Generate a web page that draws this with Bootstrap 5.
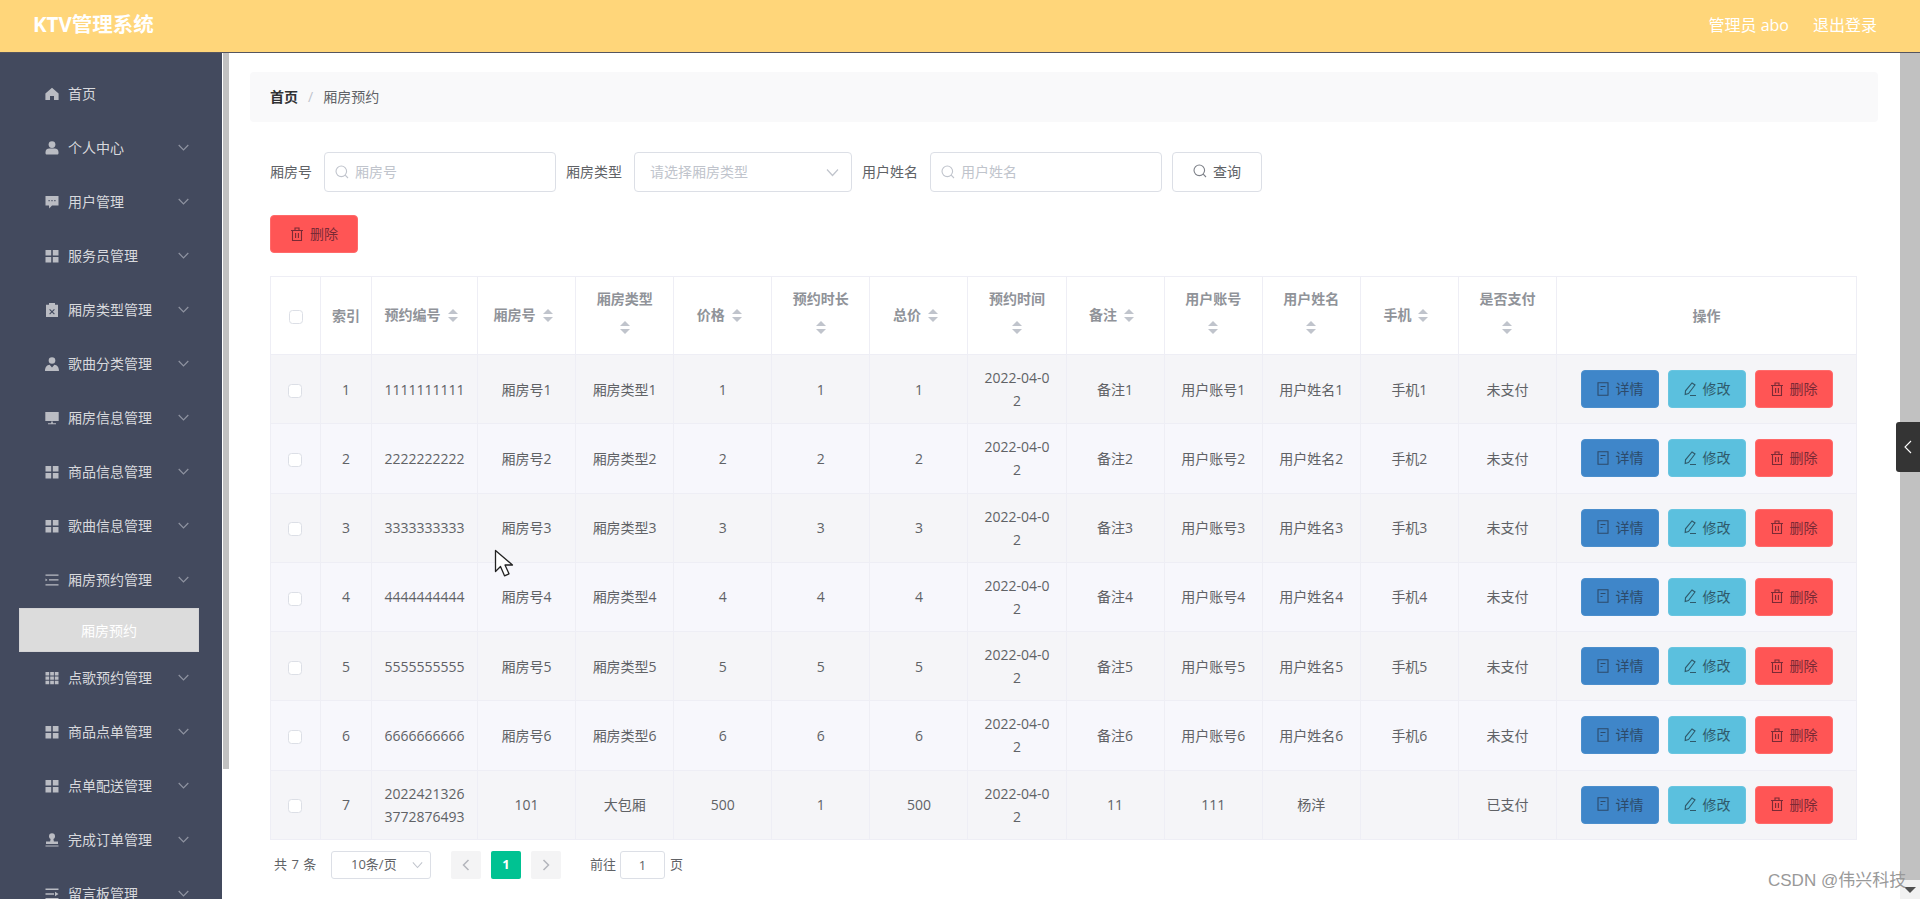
<!doctype html>
<html lang="zh-CN">
<head>
<meta charset="utf-8">
<title>KTV管理系统</title>
<link href="https://cdn.jsdelivr.net/npm/bootstrap@5.3.0/dist/css/bootstrap.min.css" rel="stylesheet">
<style>
html,body{height:100%;}
body{font-family:"Open Sans","Noto Sans CJK SC",sans-serif;font-size:14px;color:#606266;overflow:hidden;background:#fff;}
.ico{width:14px;height:14px;fill:currentColor;flex:none;}
.line-ico{width:14px;height:14px;fill:none;stroke:currentColor;stroke-width:1.1;flex:none;}
.top-bar{height:53px;padding:0 43px 3px 33px;background:#ffd67a;border-bottom:1px solid #55555f;flex:none;}
.brand-text{font-size:20.5px;font-weight:700;color:#fff;padding:0;margin:0;}
.top-link{font-size:16px;color:#fff;text-decoration:none;}
.app-body{min-height:0;}
.side-menu{width:222px;background:#434a5e;padding-top:15px;overflow:hidden;flex:none;}
.side-link{height:54px;flex:none;padding:0 33px 3px 45px;color:#d8d9dd;font-size:14px;gap:9px;text-decoration:none;}
.side-link .ico{color:#babcc3;}
.side-link .caret-down{width:11px;height:7px;margin-left:auto;fill:none;stroke:#8f93a1;stroke-width:1.2;flex:none;}
.side-sub{height:44px;flex:none;margin:0 23px 0 19px;background:#dcdcdc;color:#fff;border:1px solid #d4d4d6;}
.side-track{width:8px;flex:none;background:#fff;padding:0 1px;}
.side-thumb{height:716px;background:#c1c1c1;}
.main-pane{padding:19px 22px 0 20px;min-width:0;}
.crumb-box{height:50px;background:#f9f9fa;border-radius:4px;padding:0 20px 2px;margin:0;--bs-breadcrumb-margin-bottom:0;--bs-breadcrumb-item-padding-x:10px;--bs-breadcrumb-divider-color:#c0c4cc;}
.crumb-box .breadcrumb-item{color:#606266;}
.crumb-box .breadcrumb-item:first-child{color:#303133;font-weight:700;}
.crumb-wrap{height:50px;}
.work-area{padding:30px 1px 0 20px;}
.search-row{gap:10px;height:40px;margin-bottom:23px;}
.field-label{color:#606266;margin-right:2px;white-space:nowrap;padding-bottom:2px;}
.input-holder{width:232px;}
.input-holder .form-control{height:40px;font-size:14px;padding:0 12px 2px 30px;border-color:#dcdfe6;border-radius:4px;}
.input-holder .form-control::placeholder{color:#c0c4cc;}
.input-holder .line-ico{position:absolute;left:11px;top:13px;color:#c0c4cc;}
.select-holder{width:218px;}
.select-holder .form-select{height:40px;font-size:14px;color:#c0c4cc;padding:0 30px 2px 15px;border-color:#dcdfe6;border-radius:4px;background-position:right 12px center;background-size:13px 9px;background-image:url("data:image/svg+xml,%3Csvg xmlns='http://www.w3.org/2000/svg' viewBox='0 0 13 9'%3E%3Cpath d='M1 1.500l5.500 6 5.500-6' fill='none' stroke='%23c0c4cc' stroke-width='1.2'/%3E%3C/svg%3E");}
.query-btn{width:90px;height:40px;padding:0 0 2px;font-size:14px;color:#606266;background:#fff;border:1px solid #dcdfe6;border-radius:4px;gap:6px;}
.query-btn .line-ico{color:#7d8088;}
.act-btn{height:38px;width:78px;padding:0 0 1px;font-size:14px;color:#333a48;border:1px solid transparent;border-radius:4px;gap:6px;}
.act-blue{background:#3f86c9;border-color:#4b8ecc;color:#2c4a6a;}
.act-cyan{background:#5bc0de;border-color:#68c5e0;color:#2f5a6b;}
.act-red{background:#ff5555;border-color:#ff6a6a;color:#7a2a35;}
.bulk-btn{width:88px;display:flex;margin-bottom:23px;}
.data-table{table-layout:fixed;width:1586px;margin:0;color:#606266;--bs-table-color:#606266;--bs-border-color:#eeeef5;}
.data-table>:not(caption)>*>*{padding:0 10px;line-height:23px;word-break:break-all;text-align:center;vertical-align:middle;border-color:#eeeef5;}
.data-table>tbody>tr>td.date-cell{padding:0 14px;}
.data-table th{height:78px;background:#fff;color:#909399;font-weight:700;box-shadow:none;}
.data-table td{height:69.25px;box-shadow:none;}
.data-table tbody tr:nth-child(odd) td{background:#f5f5f8;}
.data-table tbody tr:nth-child(even) td{background:#f7f7fc;}
.w-check{width:50px;}.w-idx{width:51px;}.w-code{width:106px;}.w-cell{width:98.1px;}.w-act{width:300px;}
.tick{width:14px;height:14px;margin:0;border-color:#dcdfe6;border-radius:2px;background-color:#fff;display:inline-block;vertical-align:middle;float:none;}
tbody .tick{position:relative;left:-1px;}
.sort-wrap{display:inline-flex;flex-direction:column;align-items:center;justify-content:center;gap:3px;width:24px;height:34px;vertical-align:middle;}
.sort-wrap i{display:block;width:0;height:0;border-left:5px solid transparent;border-right:5px solid transparent;}
.sort-wrap i:first-child{border-bottom:5px solid #c0c4cc;}
.sort-wrap i:last-child{border-top:5px solid #c0c4cc;}
.action-row{gap:9px;}
.pager-row{margin-top:11px;padding-left:4px;height:28px;font-size:13px;color:#606266;}
.pager-total{width:42px;margin-right:15px;white-space:nowrap;word-spacing:1px;}
.pager-size{width:100px;height:28px;margin-right:20px;font-size:13px;color:#606266;padding:0 0 0 19px;border-color:#dcdfe6;border-radius:3px;background-position:right 7px center;background-size:11px 8px;background-image:url("data:image/svg+xml,%3Csvg xmlns='http://www.w3.org/2000/svg' viewBox='0 0 13 9'%3E%3Cpath d='M1 1.500l5.500 6 5.500-6' fill='none' stroke='%23c0c4cc' stroke-width='1.2'/%3E%3C/svg%3E");}
.pager-list{gap:10px;margin:0 29px 0 0;}
.pager-list .page-item .page-link{width:30px;height:28px;padding:0;display:flex;align-items:center;justify-content:center;background:#f4f4f5;border:0;border-radius:2px;color:#b4b6bc;font-size:13px;margin:0;}
.pager-list .page-item:not(:first-child) .page-link{margin-left:0;}
.pager-list .page-item.active .page-link{background:#00c292;color:#fff;font-weight:700;}
.pager-goto{width:45px;height:28px;margin:0 5px 0 4px;padding:0;text-align:center;font-size:13px;color:#606266;border-color:#dcdfe6;border-radius:3px;}
.page-track{width:20px;flex:none;background:#c1c1c1;}
.page-track-end{height:19px;background:#f1f1f1;margin-top:auto;}
.tri-down{width:0;height:0;border-left:6px solid transparent;border-right:6px solid transparent;border-top:6px solid #505050;}
.drawer-tab{position:absolute;right:0;top:422px;width:24px;height:50px;background:#343434;border-radius:3px 0 0 3px;color:#fff;}
.mark-text{position:absolute;left:1768px;top:869px;font-size:17px;line-height:24px;color:#999;font-family:"Liberation Sans","Noto Sans CJK SC",sans-serif;white-space:nowrap;}
.pointer-img{position:absolute;left:494px;top:549px;width:22px;height:31px;}
</style>
</head>
<body class="d-flex flex-column position-relative">
<svg class="d-none" xmlns="http://www.w3.org/2000/svg">
<symbol id="i-home" viewBox="0 0 14 14"><path d="M7 .8 13.600 6.600 V13 H9 V9 H5 V13 H.4 V6.600 Z"/></symbol>
<symbol id="i-user" viewBox="0 0 14 14"><circle cx="7" cy="3.600" r="3.400"/><path d="M.5 11c0-2.600 2-3.600 3.600-3.600h5.800c1.600 0 3.600 1 3.600 3.600v1.200c0 .9-.6 1.300-1.400 1.300H1.900C1.100 13.500.5 13.100.5 12.200z"/></symbol>
<symbol id="i-chat" viewBox="0 0 14 14"><path fill-rule="evenodd" d="M.5 1h13v9.500H7L4.200 13.600 4 10.500H.5zM3.500 5v1.200h1.200V5zM6.400 5v1.200h1.200V5zM9.300 5v1.200h1.200V5z"/></symbol>
<symbol id="i-grid" viewBox="0 0 14 14"><path d="M.5 1h5.700v5.500H.5zM7.800 1h5.700v5.500H7.800zM.5 8h5.700v5.500H.5zM7.800 8h5.700v5.500H7.800z"/></symbol>
<symbol id="i-clip" viewBox="0 0 14 14"><path fill-rule="evenodd" d="M1 1.800h3V0h6v1.800h3V14H1zM5 6l2 2 2-2 .8.800-2 2 2 2-.8.800-2-2-2 2-.8-.8 2-2-2-2z"/></symbol>
<symbol id="i-tie" viewBox="0 0 14 14"><circle cx="7" cy="3.500" r="3.300"/><path d="M0 14c0-3.800 2-6 4.600-6.200L7 10.500l2.400-2.700C12 8 14 10.200 14 14z"/></symbol>
<symbol id="i-screen" viewBox="0 0 14 14"><path d="M.3 1h13.400v9H.3zM6.200 10.500h1.600v1.800H11v1H3v-1h3.200z"/></symbol>
<symbol id="i-menu" viewBox="0 0 14 14"><path d="M.5 1.500h13v1.200H.5zM4 6.300h9.500v1.200H4zM.5 5.600l2 1.300-2 1.300zM.5 11.200h13v1.200H.5z"/></symbol>
<symbol id="i-nine" viewBox="0 0 14 14"><path d="M.5 1h3.700v3.400H.5zM5.200 1h3.700v3.400H5.200zM9.800 1h3.700v3.400H9.800zM.5 5.400h3.700v3.400H.5zM5.200 5.400h3.700v3.400H5.200zM9.800 5.400h3.700v3.400H9.800zM.5 9.800h3.700v3.400H.5zM5.200 9.800h3.700v3.400H5.200zM9.800 9.800h3.700v3.400H9.800z"/></symbol>
<symbol id="i-stamp" viewBox="0 0 14 14"><circle cx="7" cy="3.200" r="3"/><path d="M5.600 6h2.800l.5 2.400H13V11H1V8.400h4.100zM.5 12.500h13v1.100H.5z"/></symbol>
<symbol id="i-lines" viewBox="0 0 14 14"><path d="M.5 1.500h13v1.400H.5zM.5 6.300h8.500v1.400H.5zM10 4.800l3.500 2.200L10 9.200zM.5 11h13v1.400H.5z"/></symbol>
<symbol id="l-search" viewBox="0 0 14 14"><circle cx="6.300" cy="6.300" r="5.300"/><path d="M10.200 10.200l2.800 2.800"/></symbol>
<symbol id="l-trash" viewBox="0 0 14 14"><path d="M2.500 3.500V13.500h9V3.500M1 3.500h12M5 3.500V1h4v2.500M5.600 6v5M8.400 6v5"/></symbol>
<symbol id="l-doc" viewBox="0 0 14 14"><path d="M2 .8h10v12.400H2zM4.500 4.500h5M4.500 7.500h2"/></symbol>
<symbol id="l-pen" viewBox="0 0 14 14"><path d="M9 1 12 3 5.500 11.500 2.200 12.500 2.500 8.800zM7 13.500h6"/></symbol>
<symbol id="l-down" viewBox="0 0 11 7"><path d="M.7 1l4.800 4.800L10.300 1"/></symbol>
</svg>

<header class="navbar top-bar d-flex align-items-center justify-content-between flex-nowrap">
  <span class="navbar-brand brand-text">KTV管理系统</span>
  <div class="d-flex gap-4">
    <a class="top-link" href="#">管理员 abo</a>
    <a class="top-link" href="#">退出登录</a>
  </div>
</header>

<div class="app-body d-flex flex-grow-1">
  <nav class="side-menu nav flex-column flex-nowrap">
    <a class="side-link d-flex align-items-center" href="#"><svg class="ico"><use href="#i-home"/></svg>首页</a>
    <a class="side-link d-flex align-items-center" href="#"><svg class="ico"><use href="#i-user"/></svg>个人中心<svg class="caret-down"><use href="#l-down"/></svg></a>
    <a class="side-link d-flex align-items-center" href="#"><svg class="ico"><use href="#i-chat"/></svg>用户管理<svg class="caret-down"><use href="#l-down"/></svg></a>
    <a class="side-link d-flex align-items-center" href="#"><svg class="ico"><use href="#i-grid"/></svg>服务员管理<svg class="caret-down"><use href="#l-down"/></svg></a>
    <a class="side-link d-flex align-items-center" href="#"><svg class="ico"><use href="#i-clip"/></svg>厢房类型管理<svg class="caret-down"><use href="#l-down"/></svg></a>
    <a class="side-link d-flex align-items-center" href="#"><svg class="ico"><use href="#i-tie"/></svg>歌曲分类管理<svg class="caret-down"><use href="#l-down"/></svg></a>
    <a class="side-link d-flex align-items-center" href="#"><svg class="ico"><use href="#i-screen"/></svg>厢房信息管理<svg class="caret-down"><use href="#l-down"/></svg></a>
    <a class="side-link d-flex align-items-center" href="#"><svg class="ico"><use href="#i-grid"/></svg>商品信息管理<svg class="caret-down"><use href="#l-down"/></svg></a>
    <a class="side-link d-flex align-items-center" href="#"><svg class="ico"><use href="#i-grid"/></svg>歌曲信息管理<svg class="caret-down"><use href="#l-down"/></svg></a>
    <a class="side-link d-flex align-items-center" href="#"><svg class="ico"><use href="#i-menu"/></svg>厢房预约管理<svg class="caret-down"><use href="#l-down"/></svg></a>
    <div class="side-sub d-flex align-items-center justify-content-center">厢房预约</div>
    <a class="side-link d-flex align-items-center" href="#"><svg class="ico"><use href="#i-nine"/></svg>点歌预约管理<svg class="caret-down"><use href="#l-down"/></svg></a>
    <a class="side-link d-flex align-items-center" href="#"><svg class="ico"><use href="#i-grid"/></svg>商品点单管理<svg class="caret-down"><use href="#l-down"/></svg></a>
    <a class="side-link d-flex align-items-center" href="#"><svg class="ico"><use href="#i-grid"/></svg>点单配送管理<svg class="caret-down"><use href="#l-down"/></svg></a>
    <a class="side-link d-flex align-items-center" href="#"><svg class="ico"><use href="#i-stamp"/></svg>完成订单管理<svg class="caret-down"><use href="#l-down"/></svg></a>
    <a class="side-link d-flex align-items-center" href="#"><svg class="ico"><use href="#i-lines"/></svg>留言板管理<svg class="caret-down"><use href="#l-down"/></svg></a>
  </nav>
  <div class="side-track"><div class="side-thumb"></div></div>

  <main class="main-pane flex-grow-1">
    <div class="crumb-wrap">
      <ol class="breadcrumb crumb-box align-items-center">
        <li class="breadcrumb-item">首页</li>
        <li class="breadcrumb-item active">厢房预约</li>
      </ol>
    </div>
    <div class="work-area">
      <form class="search-row d-flex align-items-center">
        <span class="field-label">厢房号</span>
        <div class="input-holder position-relative"><svg class="line-ico"><use href="#l-search"/></svg><input class="form-control" placeholder="厢房号"></div>
        <span class="field-label">厢房类型</span>
        <div class="select-holder"><select class="form-select"><option>请选择厢房类型</option></select></div>
        <span class="field-label">用户姓名</span>
        <div class="input-holder position-relative"><svg class="line-ico"><use href="#l-search"/></svg><input class="form-control" placeholder="用户姓名"></div>
        <button type="button" class="btn query-btn d-flex align-items-center justify-content-center"><svg class="line-ico"><use href="#l-search"/></svg>查询</button>
      </form>
      <button type="button" class="btn act-btn act-red bulk-btn align-items-center justify-content-center"><svg class="line-ico"><use href="#l-trash"/></svg>删除</button>

      <table class="table table-bordered data-table">
        <colgroup><col class="w-check"><col class="w-idx"><col class="w-code"><col class="w-cell"><col class="w-cell"><col class="w-cell"><col class="w-cell"><col class="w-cell"><col class="w-cell"><col class="w-cell"><col class="w-cell"><col class="w-cell"><col class="w-cell"><col class="w-cell"><col class="w-act"></colgroup>
        <thead>
          <tr>
            <th><input class="form-check-input tick" type="checkbox"></th>
            <th>索引</th>
            <th>预约编号<span class="sort-wrap"><i></i><i></i></span></th>
            <th>厢房号<span class="sort-wrap"><i></i><i></i></span></th>
            <th>厢房类型<span class="sort-wrap"><i></i><i></i></span></th>
            <th>价格<span class="sort-wrap"><i></i><i></i></span></th>
            <th>预约时长<span class="sort-wrap"><i></i><i></i></span></th>
            <th>总价<span class="sort-wrap"><i></i><i></i></span></th>
            <th>预约时间<span class="sort-wrap"><i></i><i></i></span></th>
            <th>备注<span class="sort-wrap"><i></i><i></i></span></th>
            <th>用户账号<span class="sort-wrap"><i></i><i></i></span></th>
            <th>用户姓名<span class="sort-wrap"><i></i><i></i></span></th>
            <th>手机<span class="sort-wrap"><i></i><i></i></span></th>
            <th>是否支付<span class="sort-wrap"><i></i><i></i></span></th>
            <th>操作</th>
          </tr>
        </thead>
        <tbody>
          <tr><td><input class="form-check-input tick" type="checkbox"></td><td>1</td><td>1111111111</td><td>厢房号1</td><td>厢房类型1</td><td>1</td><td>1</td><td>1</td><td class="date-cell">2022-04-02</td><td>备注1</td><td>用户账号1</td><td>用户姓名1</td><td>手机1</td><td>未支付</td><td><div class="action-row d-flex justify-content-center"><button type="button" class="btn act-btn act-blue d-flex align-items-center justify-content-center"><svg class="line-ico"><use href="#l-doc"/></svg>详情</button><button type="button" class="btn act-btn act-cyan d-flex align-items-center justify-content-center"><svg class="line-ico"><use href="#l-pen"/></svg>修改</button><button type="button" class="btn act-btn act-red d-flex align-items-center justify-content-center"><svg class="line-ico"><use href="#l-trash"/></svg>删除</button></div></td></tr>
          <tr><td><input class="form-check-input tick" type="checkbox"></td><td>2</td><td>2222222222</td><td>厢房号2</td><td>厢房类型2</td><td>2</td><td>2</td><td>2</td><td class="date-cell">2022-04-02</td><td>备注2</td><td>用户账号2</td><td>用户姓名2</td><td>手机2</td><td>未支付</td><td><div class="action-row d-flex justify-content-center"><button type="button" class="btn act-btn act-blue d-flex align-items-center justify-content-center"><svg class="line-ico"><use href="#l-doc"/></svg>详情</button><button type="button" class="btn act-btn act-cyan d-flex align-items-center justify-content-center"><svg class="line-ico"><use href="#l-pen"/></svg>修改</button><button type="button" class="btn act-btn act-red d-flex align-items-center justify-content-center"><svg class="line-ico"><use href="#l-trash"/></svg>删除</button></div></td></tr>
          <tr><td><input class="form-check-input tick" type="checkbox"></td><td>3</td><td>3333333333</td><td>厢房号3</td><td>厢房类型3</td><td>3</td><td>3</td><td>3</td><td class="date-cell">2022-04-02</td><td>备注3</td><td>用户账号3</td><td>用户姓名3</td><td>手机3</td><td>未支付</td><td><div class="action-row d-flex justify-content-center"><button type="button" class="btn act-btn act-blue d-flex align-items-center justify-content-center"><svg class="line-ico"><use href="#l-doc"/></svg>详情</button><button type="button" class="btn act-btn act-cyan d-flex align-items-center justify-content-center"><svg class="line-ico"><use href="#l-pen"/></svg>修改</button><button type="button" class="btn act-btn act-red d-flex align-items-center justify-content-center"><svg class="line-ico"><use href="#l-trash"/></svg>删除</button></div></td></tr>
          <tr><td><input class="form-check-input tick" type="checkbox"></td><td>4</td><td>4444444444</td><td>厢房号4</td><td>厢房类型4</td><td>4</td><td>4</td><td>4</td><td class="date-cell">2022-04-02</td><td>备注4</td><td>用户账号4</td><td>用户姓名4</td><td>手机4</td><td>未支付</td><td><div class="action-row d-flex justify-content-center"><button type="button" class="btn act-btn act-blue d-flex align-items-center justify-content-center"><svg class="line-ico"><use href="#l-doc"/></svg>详情</button><button type="button" class="btn act-btn act-cyan d-flex align-items-center justify-content-center"><svg class="line-ico"><use href="#l-pen"/></svg>修改</button><button type="button" class="btn act-btn act-red d-flex align-items-center justify-content-center"><svg class="line-ico"><use href="#l-trash"/></svg>删除</button></div></td></tr>
          <tr><td><input class="form-check-input tick" type="checkbox"></td><td>5</td><td>5555555555</td><td>厢房号5</td><td>厢房类型5</td><td>5</td><td>5</td><td>5</td><td class="date-cell">2022-04-02</td><td>备注5</td><td>用户账号5</td><td>用户姓名5</td><td>手机5</td><td>未支付</td><td><div class="action-row d-flex justify-content-center"><button type="button" class="btn act-btn act-blue d-flex align-items-center justify-content-center"><svg class="line-ico"><use href="#l-doc"/></svg>详情</button><button type="button" class="btn act-btn act-cyan d-flex align-items-center justify-content-center"><svg class="line-ico"><use href="#l-pen"/></svg>修改</button><button type="button" class="btn act-btn act-red d-flex align-items-center justify-content-center"><svg class="line-ico"><use href="#l-trash"/></svg>删除</button></div></td></tr>
          <tr><td><input class="form-check-input tick" type="checkbox"></td><td>6</td><td>6666666666</td><td>厢房号6</td><td>厢房类型6</td><td>6</td><td>6</td><td>6</td><td class="date-cell">2022-04-02</td><td>备注6</td><td>用户账号6</td><td>用户姓名6</td><td>手机6</td><td>未支付</td><td><div class="action-row d-flex justify-content-center"><button type="button" class="btn act-btn act-blue d-flex align-items-center justify-content-center"><svg class="line-ico"><use href="#l-doc"/></svg>详情</button><button type="button" class="btn act-btn act-cyan d-flex align-items-center justify-content-center"><svg class="line-ico"><use href="#l-pen"/></svg>修改</button><button type="button" class="btn act-btn act-red d-flex align-items-center justify-content-center"><svg class="line-ico"><use href="#l-trash"/></svg>删除</button></div></td></tr>
          <tr><td><input class="form-check-input tick" type="checkbox"></td><td>7</td><td>20224213263772876493</td><td>101</td><td>大包厢</td><td>500</td><td>1</td><td>500</td><td class="date-cell">2022-04-02</td><td>11</td><td>111</td><td>杨洋</td><td></td><td>已支付</td><td><div class="action-row d-flex justify-content-center"><button type="button" class="btn act-btn act-blue d-flex align-items-center justify-content-center"><svg class="line-ico"><use href="#l-doc"/></svg>详情</button><button type="button" class="btn act-btn act-cyan d-flex align-items-center justify-content-center"><svg class="line-ico"><use href="#l-pen"/></svg>修改</button><button type="button" class="btn act-btn act-red d-flex align-items-center justify-content-center"><svg class="line-ico"><use href="#l-trash"/></svg>删除</button></div></td></tr>
        </tbody>
      </table>

      <div class="pager-row d-flex align-items-center">
        <span class="pager-total">共 7 条</span>
        <select class="form-select pager-size"><option>10条/页</option></select>
        <ul class="pagination pager-list">
          <li class="page-item"><span class="page-link"><svg width="8" height="12" viewBox="0 0 8 12" fill="none" stroke="currentColor" stroke-width="1.500"><path d="M6.500 1 1.500 6l5 5"/></svg></span></li>
          <li class="page-item active"><span class="page-link">1</span></li>
          <li class="page-item"><span class="page-link"><svg width="8" height="12" viewBox="0 0 8 12" fill="none" stroke="currentColor" stroke-width="1.500"><path d="M1.500 1l5 5-5 5"/></svg></span></li>
        </ul>
        <span>前往</span>
        <input class="form-control pager-goto" value="1">
        <span>页</span>
      </div>
    </div>
  </main>

  <div class="page-track d-flex flex-column">
    <div class="page-track-end d-flex align-items-center justify-content-center"><div class="tri-down"></div></div>
  </div>
</div>

<div class="drawer-tab d-flex align-items-center justify-content-center">
  <svg width="8" height="14" viewBox="0 0 8 14" fill="none" stroke="currentColor" stroke-width="1.1"><path d="M7 1 1 7l6 6"/></svg>
</div>
<div class="mark-text">CSDN @伟兴科技</div>
<svg class="pointer-img" viewBox="0 0 22 31"><path d="M1.500 1.500V22.500L6.500 17.500 10.500 26.800 15 24.800 11 16H18.500Z" fill="#fff" stroke="#222" stroke-width="1.300" stroke-linejoin="round"/></svg>
<script src="https://cdn.jsdelivr.net/npm/bootstrap@5.3.0/dist/js/bootstrap.bundle.min.js"></script>
</body>
</html>
